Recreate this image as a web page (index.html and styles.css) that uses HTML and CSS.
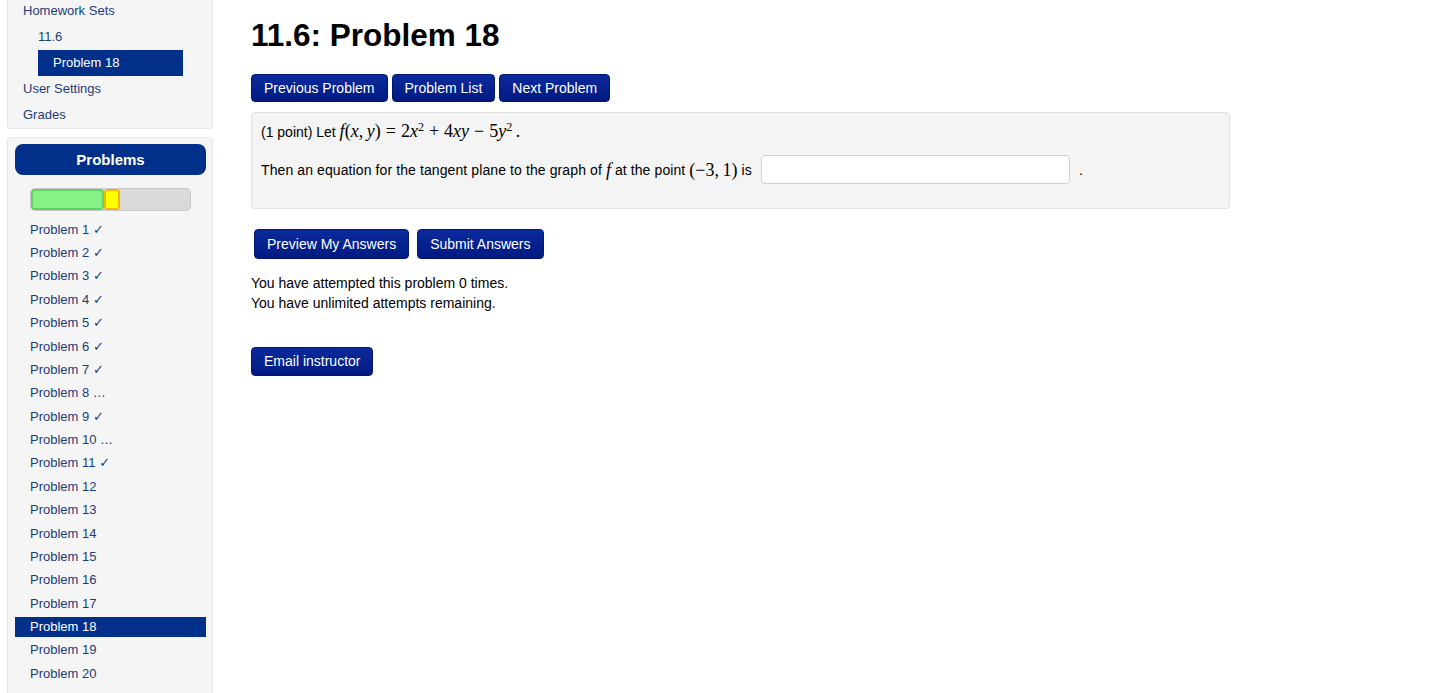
FILE: index.html
```html
<!DOCTYPE html>
<html lang="en">
<head>
<meta charset="utf-8">
<title>11.6: Problem 18</title>
<link rel="stylesheet" href="styles.css">
</head>
<body>
<div class="page">
  <aside class="sidebar">
    <nav class="well nav-well">
      <ul class="nav">
        <li><a href="#">Homework Sets</a>
          <ul class="nav sub">
            <li><a href="#">11.6</a>
              <ul class="nav sub2">
                <li><a class="active" href="#">Problem 18</a></li>
              </ul>
            </li>
          </ul>
        </li>
        <li><a href="#">User Settings</a></li>
        <li><a href="#">Grades</a></li>
      </ul>
    </nav>
    <div class="well problems-well">
      <div class="problems-header">Problems</div>
      <div class="progress">
        <div class="bar bar-green"></div>
        <div class="bar bar-yellow"></div>
      </div>
      <ul class="plist">
        <li><a href="#">Problem 1 <span class="ck">✓</span></a></li>
        <li><a href="#">Problem 2 <span class="ck">✓</span></a></li>
        <li><a href="#">Problem 3 <span class="ck">✓</span></a></li>
        <li><a href="#">Problem 4 <span class="ck">✓</span></a></li>
        <li><a href="#">Problem 5 <span class="ck">✓</span></a></li>
        <li><a href="#">Problem 6 <span class="ck">✓</span></a></li>
        <li><a href="#">Problem 7 <span class="ck">✓</span></a></li>
        <li><a href="#">Problem 8 …</a></li>
        <li><a href="#">Problem 9 <span class="ck">✓</span></a></li>
        <li><a href="#">Problem 10 …</a></li>
        <li><a href="#">Problem 11 <span class="ck">✓</span></a></li>
        <li><a href="#">Problem 12</a></li>
        <li><a href="#">Problem 13</a></li>
        <li><a href="#">Problem 14</a></li>
        <li><a href="#">Problem 15</a></li>
        <li><a href="#">Problem 16</a></li>
        <li><a href="#">Problem 17</a></li>
        <li><a class="active" href="#">Problem 18</a></li>
        <li><a href="#">Problem 19</a></li>
        <li><a href="#">Problem 20</a></li>
      </ul>
    </div>
  </aside>
  <main class="content">
    <h1 class="title">11.6: Problem 18</h1>
    <div class="btn-row nav-buttons">
      <button class="btn">Previous Problem</button>
      <button class="btn">Problem List</button>
      <button class="btn">Next Problem</button>
    </div>
    <div class="problem">
      <p class="line1">(1 point) Let <span class="math"><i>f</i>(<i>x</i>,&#8201;<i>y</i>)<span class="op">=</span>2<i>x</i><sup>2</sup><span class="op">+</span>4<i>x</i><i>y</i><span class="op">−</span>5<i>y</i><sup>2</sup>&#8201;.</span></p>
      <p class="line2">Then an equation for the tangent plane to the graph of <span class="math"><i>f</i></span> at the point <span class="math">(−3,&#8201;1)</span> is <input class="answer" type="text"><span class="dot">.</span></p>
    </div>
    <div class="btn-row submit-buttons">
      <button class="btn btn-lg">Preview My Answers</button>
      <button class="btn btn-lg">Submit Answers</button>
    </div>
    <p class="attempts">You have attempted this problem 0 times.<br>You have unlimited attempts remaining.</p>
    <button class="btn btn-email">Email instructor</button>
  </main>
</div>
</body>
</html>
```

FILE: styles.css
```css
* { box-sizing: border-box; }
html, body { margin: 0; padding: 0; background: #fff; }
body {
  font-family: "Liberation Sans", Arial, Helvetica, sans-serif;
  font-size: 14px;
  color: #000;
  overflow: hidden;
}
a { color: #1c3c78; text-decoration: none; }
ul { list-style: none; margin: 0; padding: 0; }

.page {
  display: flex;
  align-items: flex-start;
  gap: 38px;
  padding-left: 7px;
}

.sidebar {
  width: 206px;
  flex: none;
  display: flex;
  flex-direction: column;
  gap: 8px;
}

.well {
  background: #f5f5f5;
  border: 1px solid #e6e6e6;
  border-radius: 4px;
}

.nav-well {
  border-top: 0;
  border-top-left-radius: 0;
  border-top-right-radius: 0;
  margin-top: -2px;
  padding: 0 0 0 15px;
  font-size: 13px;
}
.nav a { display: block; line-height: 26px; height: 26px; }
.nav .sub { padding-left: 15px; }
.nav .sub2 a { padding-left: 15px; width: 145px; }
.nav a.active, .plist a.active { background: #00308a; color: #fff; }

.problems-well {
  padding: 6px 6px 0 7px;
  height: 600px;
}
.problems-header {
  background: #00308a;
  color: #fff;
  font-weight: bold;
  font-size: 15px;
  text-align: center;
  height: 31px;
  line-height: 31px;
  border-radius: 8px;
}
.progress {
  margin: 13px 15px 0;
  height: 23px;
  background: #dadada;
  border: 1px solid #c8c8c8;
  border-radius: 5px;
  display: flex;
}
.bar { height: 21px; border-radius: 4px; }
.bar-green { width: 73px; background: #86f286; border: 2px solid #62d262; }
.bar-yellow { width: 16px; background: #ffff00; border: 2px solid #f4b400; }

.plist { margin-top: 7px; font-size: 13px; }
.plist li { padding: 1.7px 0; }
.plist a { display: block; height: 20px; line-height: 20px; padding-left: 15px; }
.ck { font-family: "DejaVu Sans", sans-serif; font-size: 13px; }

.content { flex: 1; min-width: 0; }

.title {
  font-size: 31.5px;
  line-height: 36px;
  font-weight: bold;
  margin: 17px 0 0;
}

.btn-row { display: flex; }
.btn {
  font-family: "Liberation Sans", Arial, Helvetica, sans-serif;
  font-size: 14px;
  color: #fff;
  background: linear-gradient(#0b2a9c, #001a82);
  border: 1px solid #001670;
  border-radius: 4px;
  padding: 0 12px;
  height: 28px;
  line-height: 26px;
  cursor: pointer;
  margin: 0;
}
.nav-buttons { margin-top: 21px; gap: 4px; }

.problem {
  margin-top: 10px;
  width: 979px;
  height: 97px;
  background: #f4f4f4;
  border: 1px solid #e2e2e2;
  border-radius: 4px;
  padding: 8px 9px;
}
.problem p { margin: 0; line-height: 20px; }
.line2 { margin-top: 13px !important; display: flex; align-items: center; white-space: pre; letter-spacing: 0.1px; }
.math {
  font-family: "Liberation Serif", "Times New Roman", serif;
  font-size: 18px;
  letter-spacing: 0;
}
.math i { font-style: italic; }
.math sup { font-size: 12px; line-height: 0; vertical-align: 6px; }
.op { margin: 0 5px; }
.answer {
  width: 309px;
  height: 29px;
  margin-left: 5px;
  background: #fff;
  border: 1px solid #cfcfcf;
  border-radius: 4px;
  padding: 0;
}
.dot { margin-left: 9px; color: #000; }

.submit-buttons { margin-top: 20px; padding-left: 3px; gap: 8px; }
.btn-lg { height: 30px; line-height: 28px; padding: 0 12px; }

.attempts { margin: 14px 0 0; line-height: 20px; }

.btn-email { margin-top: 34px; height: 29px; line-height: 27px; }
```
